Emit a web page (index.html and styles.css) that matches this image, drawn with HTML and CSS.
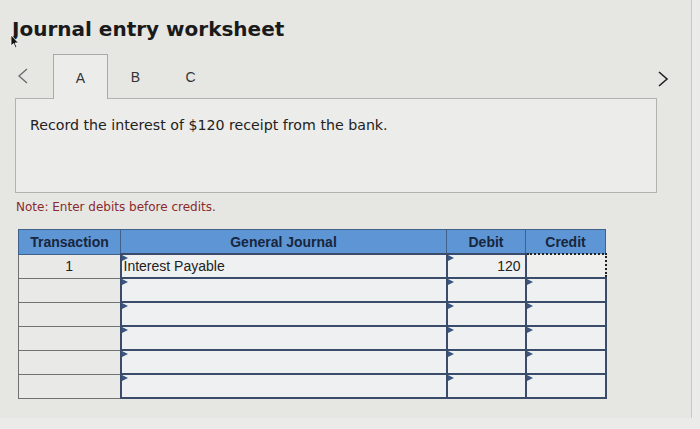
FILE: index.html
```html
<!DOCTYPE html>
<html>
<head>
<meta charset="utf-8">
<link rel="stylesheet" href="styles.css">
</head>
<body>
<div class="page">
  <h1 class="title">Journal entry worksheet</h1>
  <svg class="cursor" width="10" height="15" viewBox="0 0 10 15"><path d="M1 1 L1 12 L3.5 9.5 L5.5 14 L7 13.3 L5 9 L8.5 9 Z" fill="#111" stroke="#fff" stroke-width="0.8"/></svg>
  <div class="tabbar">
    <span class="arrow"><svg width="12" height="18" viewBox="0 0 12 18"><path d="M10 2 L2 9 L10 16" fill="none" stroke="#6a6a6a" stroke-width="1.3"/></svg></span>
    <div class="tab active">A</div>
    <div class="tab">B</div>
    <div class="tab">C</div>
    <span class="spacer"></span>
    <span class="arrow right"><svg width="12" height="18" viewBox="0 0 12 18"><path d="M2 2 L10 9 L2 16" fill="none" stroke="#222" stroke-width="1.6"/></svg></span>
  </div>
  <div class="prompt">Record the interest of $120 receipt from the bank.</div>
  <div class="note">Note: Enter debits before credits.</div>
  <table class="journal">
    <colgroup><col class="c-tx"><col class="c-gj"><col class="c-dr"><col class="c-cr"></colgroup>
    <thead>
      <tr><th>Transaction</th><th>General Journal</th><th>Debit</th><th>Credit</th></tr>
    </thead>
    <tbody>
      <tr><td class="tx">1</td><td class="in mk acct">Interest Payable</td><td class="in mk num">120</td><td class="in focus"></td></tr>
      <tr><td class="tx"></td><td class="in mk"></td><td class="in mk"></td><td class="in mk"></td></tr>
      <tr><td class="tx"></td><td class="in mk"></td><td class="in mk"></td><td class="in mk"></td></tr>
      <tr><td class="tx"></td><td class="in mk"></td><td class="in mk"></td><td class="in mk"></td></tr>
      <tr><td class="tx"></td><td class="in mk"></td><td class="in mk"></td><td class="in mk"></td></tr>
      <tr><td class="tx"></td><td class="in mk"></td><td class="in mk"></td><td class="in mk"></td></tr>
    </tbody>
  </table>
</div>
</body>
</html>
```
FILE: styles.css
```css
html, body {
  margin: 0;
  padding: 0;
  background: #ebebe9;
}
body {
  width: 700px;
  height: 429px;
  overflow: hidden;
  font-family: "DejaVu Sans", Verdana, sans-serif;
}
.page {
  position: relative;
  width: 692px;
  height: 418px;
  box-sizing: border-box;
  background: #e6e6e3;
  border-right: 1px solid #c9c9c6;
  padding-top: 15px;
}
.title {
  margin: 0 0 0 12px;
  font-size: 20px;
  font-weight: bold;
  color: #1a1a1a;
  line-height: 28px;
}
.cursor {
  position: absolute;
  left: 10px;
  top: 34px;
}
.tabbar {
  display: flex;
  align-items: flex-end;
  height: 44px;
  margin-top: 11px;
  padding-left: 15px;
  width: 657px;
  box-sizing: border-box;
  position: relative;
  z-index: 2;
}
.arrow {
  width: 38px;
  height: 18px;
  align-self: center;
  display: flex;
}
.arrow svg { margin-left: 2px; margin-top: 0; }
.arrow.right {
  width: auto;
  position: relative;
  left: 12px;
  top: 3px;
}
.spacer { flex: 1; }
.tab {
  width: 55px;
  height: 44px;
  box-sizing: border-box;
  display: flex;
  align-items: center;
  justify-content: center;
  font-family: "Liberation Sans", Arial, sans-serif;
  font-size: 14px;
  color: #333;
  padding-top: 2px;
}
.tab.active {
  border: 1px solid #a8a8a6;
  border-bottom: none;
  background: #ececea;
  height: 45px;
  margin-bottom: -1px;
}
.prompt {
  margin-left: 15px;
  width: 642px;
  height: 95px;
  box-sizing: border-box;
  border: 1px solid #b2b2b0;
  background: #ececea;
  padding: 18px 0 0 14px;
  font-size: 14.2px;
  color: #222;
}
.note {
  margin: 6px 0 0 16px;
  font-size: 12px;
  color: #8a2a2e;
  height: 17px;
  line-height: 17px;
}
.journal {
  margin: 13px 0 0 18px;
  border-collapse: collapse;
  table-layout: fixed;
  width: 587px;
  font-family: "Liberation Sans", Arial, sans-serif;
}
.c-tx { width: 102px; }
.c-gj { width: 326px; }
.c-dr { width: 79px; }
.c-cr { width: 80px; }
.journal th {
  background: #5e95d4;
  color: #18263d;
  font-size: 14px;
  font-weight: bold;
  height: 23px;
  padding: 0;
  border: 1px solid #41618a;
  text-align: center;
}
.journal tbody tr { height: 24px; }
.journal td {
  padding: 0 4px;
  font-size: 14px;
  color: #222;
  background: #eeeeec;
}
.journal td.tx {
  border: 1px solid #6f7173;
  text-align: center;
  background: #e9e9e7;
}
.journal td.in {
  border: 2.5px solid #3a4c69;
  background: #eef0f1;
  position: relative;
}
.journal td.num { text-align: right; padding-right: 4px; }
.journal td.acct { padding-left: 2px; }
.journal td.mk::before {
  content: "";
  position: absolute;
  left: 0;
  top: 0;
  border-left: 6px solid #3b5680;
  border-top: 3px solid transparent;
  border-bottom: 3px solid transparent;
}
.journal td.focus {
  border: 2px dotted #222;
  background: #efefed;
}
```
